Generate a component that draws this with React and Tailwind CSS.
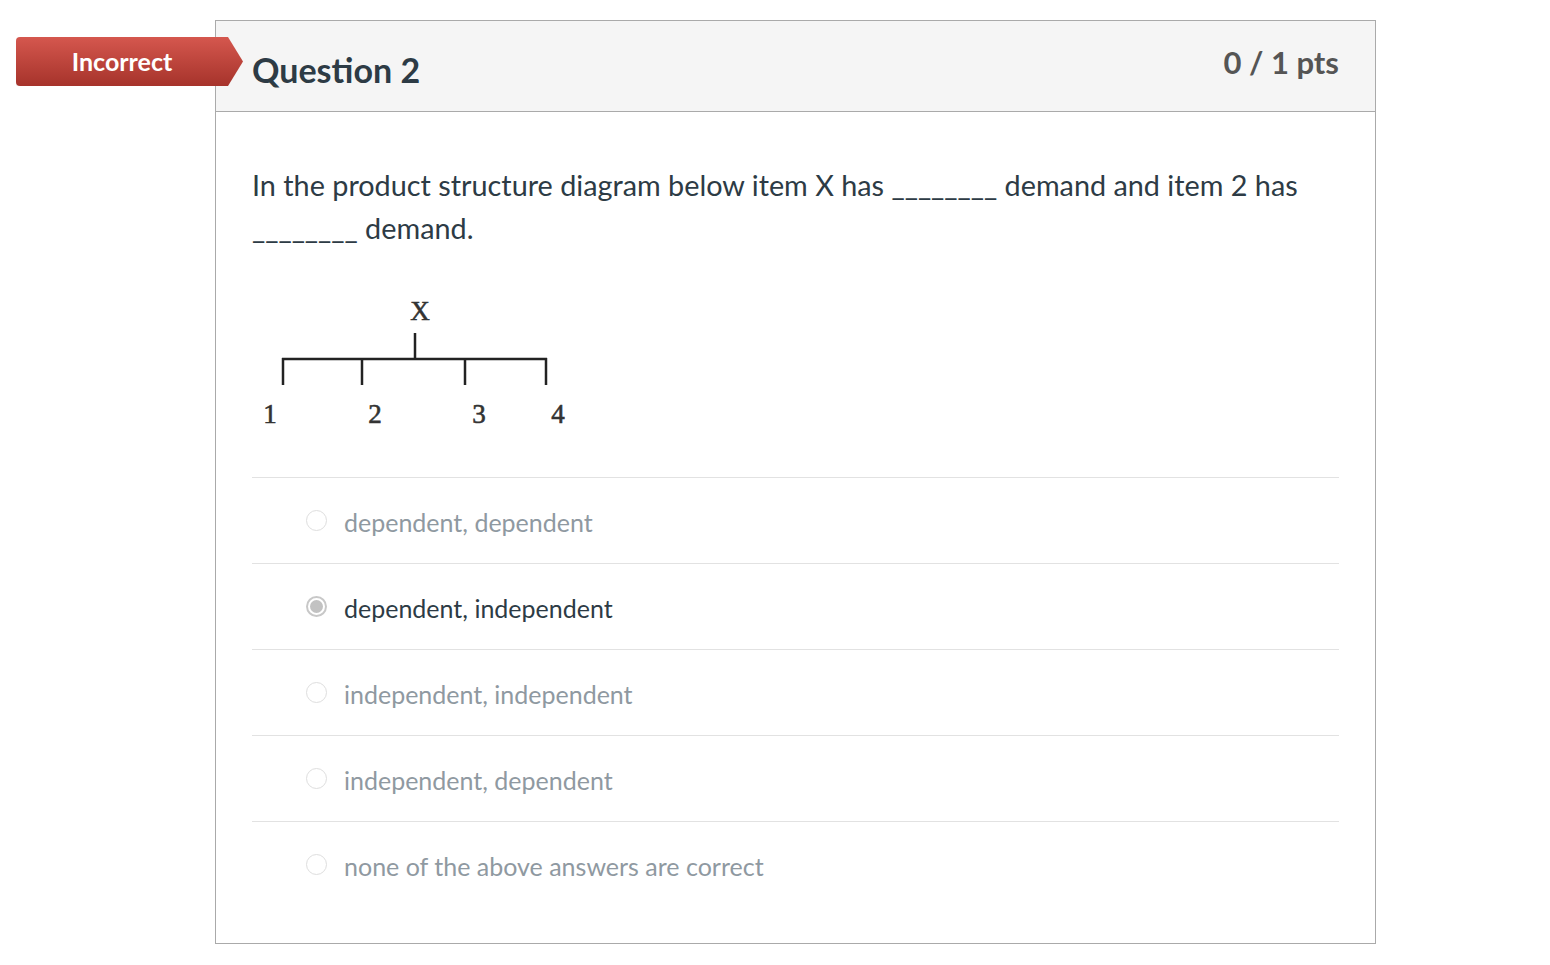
import React from 'react';

const options = [
  { label: 'dependent, dependent', selected: false },
  { label: 'dependent, independent', selected: true },
  { label: 'independent, independent', selected: false },
  { label: 'independent, dependent', selected: false },
  { label: 'none of the above answers are correct', selected: false },
];

const Diagram = () => (
  <svg width="330" height="160" viewBox="0 0 330 160" className="block">
    <g stroke="#222" strokeWidth="2.5" fill="none">
      <line x1="163" y1="48" x2="163" y2="74" />
      <line x1="30" y1="74" x2="295" y2="74" />
      <line x1="31" y1="73" x2="31" y2="100" />
      <line x1="110" y1="74" x2="110" y2="100" />
      <line x1="213" y1="74" x2="213" y2="100" />
      <line x1="294" y1="73" x2="294" y2="100" />
    </g>
    <g fill="#333" stroke="#333" strokeWidth="0.6" fontFamily="'Liberation Serif', serif" fontSize="27" textAnchor="middle">
      <text x="168" y="35">X</text>
      <text x="18" y="138">1</text>
      <text x="123" y="138">2</text>
      <text x="227" y="138">3</text>
      <text x="306" y="138">4</text>
    </g>
  </svg>
);

const Radio = ({ selected }) =>
  selected ? (
    <span className="w-[21px] h-[21px] rounded-full border-2 border-[#c8c8c8] bg-white flex items-center justify-center shrink-0">
      <span className="w-[13px] h-[13px] rounded-full bg-[#c2c2c2]" />
    </span>
  ) : (
    <span className="w-[21px] h-[21px] rounded-full border border-[#dedede] bg-white shrink-0" />
  );

export default function App() {
  return (
    <div className="min-h-screen bg-white pt-[20px] pl-[215px]" style={{ fontFamily: 'Lato, "Open Sans", sans-serif' }}>
      <div className="relative w-[1161px] h-[924px] border border-[#aaaaaa] bg-white">
        <div className="absolute left-[-200px] top-[16px] w-[227px] h-[49px] rounded-l-[4px] bg-gradient-to-b from-[#d5574e] to-[#a6332b] [clip-path:polygon(0_0,212px_0,227px_50%,212px_100%,0_100%)] flex items-center justify-center pr-[15px] shadow">
          <span className="text-white text-[25px] font-bold">Incorrect</span>
        </div>

        <div className="h-[91px] bg-[#f5f5f5] border-b border-[#aaaaaa] flex justify-between px-[36px]">
          <h2 className="text-[34px] font-bold text-[#2d3b45] pt-[32px] leading-none">Question 2</h2>
          <div className="text-[31px] font-bold text-[#555] pt-[26px] leading-none">0 / 1 pts</div>
        </div>

        <div className="px-[36px] pt-[52px]">
          <p className="text-[28.8px] leading-[43px] text-[#2d3b45]">
            In the product structure diagram below item X has ________ demand and item 2 has ________ demand.
          </p>
          <div className="mt-[35px] mb-[32px]">
            <Diagram />
          </div>

          <div>
            {options.map((o) => (
              <div key={o.label} className="h-[86px] border-t border-[#e2e2e2] flex items-center pl-[54px] gap-[17px]">
                <Radio selected={o.selected} />
                <span className={`text-[25px] pt-[4px] ${o.selected ? 'text-[#2d3b45]' : 'text-[#8f99a1]'}`}>{o.label}</span>
              </div>
            ))}
          </div>
        </div>
      </div>
    </div>
  );
}
